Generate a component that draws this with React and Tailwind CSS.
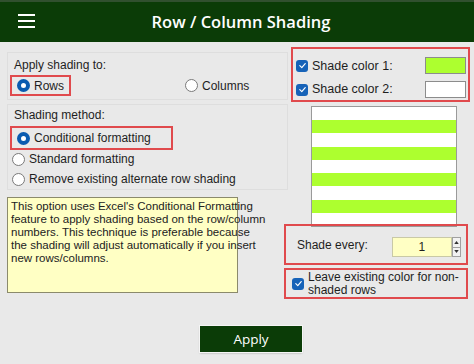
import React from 'react';

const Radio = ({ checked }) => (
    <span
        className={`inline-block w-[13px] h-[13px] rounded-full shrink-0 ${checked ? 'border-[4px] border-[#0a5bb0] bg-white' : 'border border-[#7a7a7a] bg-white'}`}
    />
);

const Check = () => (
    <span className="inline-flex items-center justify-center w-[12px] h-[12px] rounded-[3px] bg-[#1763b8] shrink-0">
        <svg viewBox="0 0 10 10" className="w-[9px] h-[9px]">
            <path d="M2 5.2 L4.2 7.3 L8 2.8" fill="none" stroke="white" strokeWidth="1.3" strokeLinecap="round" strokeLinejoin="round" />
        </svg>
    </span>
);

const App = () => {
    const stripes = [0, 1, 2, 3, 4, 5, 6, 7, 8];

    return (
        <div className="w-[474px] h-[364px] bg-[#e9e9e9] flex flex-col overflow-hidden text-[#1e1e1e] font-['Liberation_Sans',Arial,sans-serif] text-[12px] whitespace-nowrap">
            {/* header */}
            <div className="h-[42px] shrink-0 border-t-2 border-[#31502f] bg-[#0b3c07] flex items-center relative">
                <div className="absolute left-[18px] top-[12px] flex flex-col gap-[4px]">
                    <span className="block w-[17px] h-[2px] bg-white" />
                    <span className="block w-[17px] h-[2px] bg-white" />
                    <span className="block w-[17px] h-[2px] bg-white" />
                </div>
                <div className="flex-1 text-center text-white text-[16.5px] font-semibold font-['Open_Sans',sans-serif] pl-[8px]">
                    Row / Column Shading
                </div>
            </div>

            <div className="flex flex-1">
                {/* left column */}
                <div className="w-[284px] shrink-0 pl-[7px] flex flex-col">
                    <div className="mt-[10px] h-[48px] w-[281px] shrink-0 border border-[#dedede] pl-[6px] pt-[5px]">
                        <div className="leading-[15px]">Apply shading to:</div>
                        <div className="flex items-center mt-[2px]">
                            <div className="-ml-[4px] h-[21px] w-[61px] border-2 border-[#e04a4d] flex items-center gap-[4px] pl-[5px]">
                                <Radio checked />
                                <span>Rows</span>
                            </div>
                            <div className="ml-[114px] flex items-center gap-[4px]">
                                <Radio />
                                <span>Columns</span>
                            </div>
                        </div>
                    </div>

                    <div className="mt-[4px] h-[86px] w-[281px] shrink-0 border border-[#dedede] pl-[6px] pt-[3px]">
                        <div className="leading-[15px]">Shading method:</div>
                        <div className="-ml-[4px] mt-[3px] h-[24px] w-[163px] border-2 border-[#e04a4d] flex items-center gap-[4px] pl-[5px]">
                            <Radio checked />
                            <span>Conditional formatting</span>
                        </div>
                        <div className="flex items-center gap-[4px] h-[18px] -ml-[2px]">
                            <Radio />
                            <span>Standard formatting</span>
                        </div>
                        <div className="flex items-center gap-[4px] mt-[2px] h-[18px] -ml-[2px]">
                            <Radio />
                            <span>Remove existing alternate row shading</span>
                        </div>
                    </div>

                    <div className="mt-[7px] h-[96px] w-[231px] shrink-0 bg-[#ffffc4] border border-[#8b8a6c] px-[3px] pt-[2px] text-[11.5px] leading-[13px] text-[#222]">
                        This option uses Excel's Conditional Formatting<br />
                        feature to apply shading based on the row/column<br />
                        numbers. This technique is preferable because<br />
                        the shading will adjust automatically if you insert<br />
                        new rows/columns.
                    </div>
                </div>

                {/* right column */}
                <div className="flex-1 flex flex-col">
                    <div className="mt-[5px] ml-[7px] h-[55px] w-[179px] shrink-0 border-2 border-[#e04a4d] pl-[3px] pr-[2px] pb-[1px] flex flex-col justify-end gap-[5px]">
                        <div className="flex items-center gap-[4px]">
                            <Check />
                            <span className="text-[12.5px]">Shade color 1:</span>
                            <span className="ml-auto w-[41px] h-[17px] bg-[#adff2f] border border-[#8c8c8c]" />
                        </div>
                        <div className="flex items-center gap-[4px]">
                            <Check />
                            <span className="text-[12.5px]">Shade color 2:</span>
                            <span className="ml-auto w-[41px] h-[17px] bg-white border border-[#8c8c8c]" />
                        </div>
                    </div>

                    <div className="mt-[4px] ml-[27px] w-[146px] h-[121px] shrink-0 border border-[#9a9a9a] flex flex-col">
                        {stripes.map((i) => (
                            <div key={i} className={`flex-1 ${i % 2 === 1 ? 'bg-[#adff2f]' : 'bg-white'}`} />
                        ))}
                    </div>

                    <div className="-mt-[3px] h-[41px] w-[184px] shrink-0 border-2 border-[#e04a4d] flex items-end pb-[6px] pl-[11px]">
                        <span className="mb-[3px] shrink-0">Shade every:</span>
                        <div className="ml-[24px] w-[60px] h-[20px] shrink-0 bg-[#ffffc4] border border-[#c9c9a6] flex items-center justify-center">
                            1
                        </div>
                        <div className="w-[9px] h-[20px] shrink-0 flex flex-col border border-[#a0a0a0] bg-[#f2f2f2]">
                            <div className="flex-1 flex items-center justify-center border-b border-[#a0a0a0]">
                                <svg viewBox="0 0 6 4" className="w-[5px] h-[3px]"><path d="M0 4 L3 0 L6 4 Z" fill="#333" /></svg>
                            </div>
                            <div className="flex-1 flex items-center justify-center">
                                <svg viewBox="0 0 6 4" className="w-[5px] h-[3px]"><path d="M0 0 L3 4 L6 0 Z" fill="#333" /></svg>
                            </div>
                        </div>
                    </div>

                    <div className="mt-[3px] h-[31px] w-[184px] shrink-0 border-2 border-[#e04a4d] flex items-center pl-[6px] gap-[4px]">
                        <Check />
                        <span className="leading-[13px]">Leave existing color for non-<br />shaded rows</span>
                    </div>
                </div>
            </div>

            {/* footer */}
            <div className="h-[38px] shrink-0 flex items-start pl-[200px]">
                <button className="w-[102px] h-[26px] bg-[#0b3c07] text-white text-[13.5px] font-['Open_Sans',sans-serif] outline outline-1 outline-[#f5f5f5] shadow-[0_1px_2px_rgba(0,0,0,0.35)]">
                    Apply
                </button>
            </div>
        </div>
    );
};

export default App;
